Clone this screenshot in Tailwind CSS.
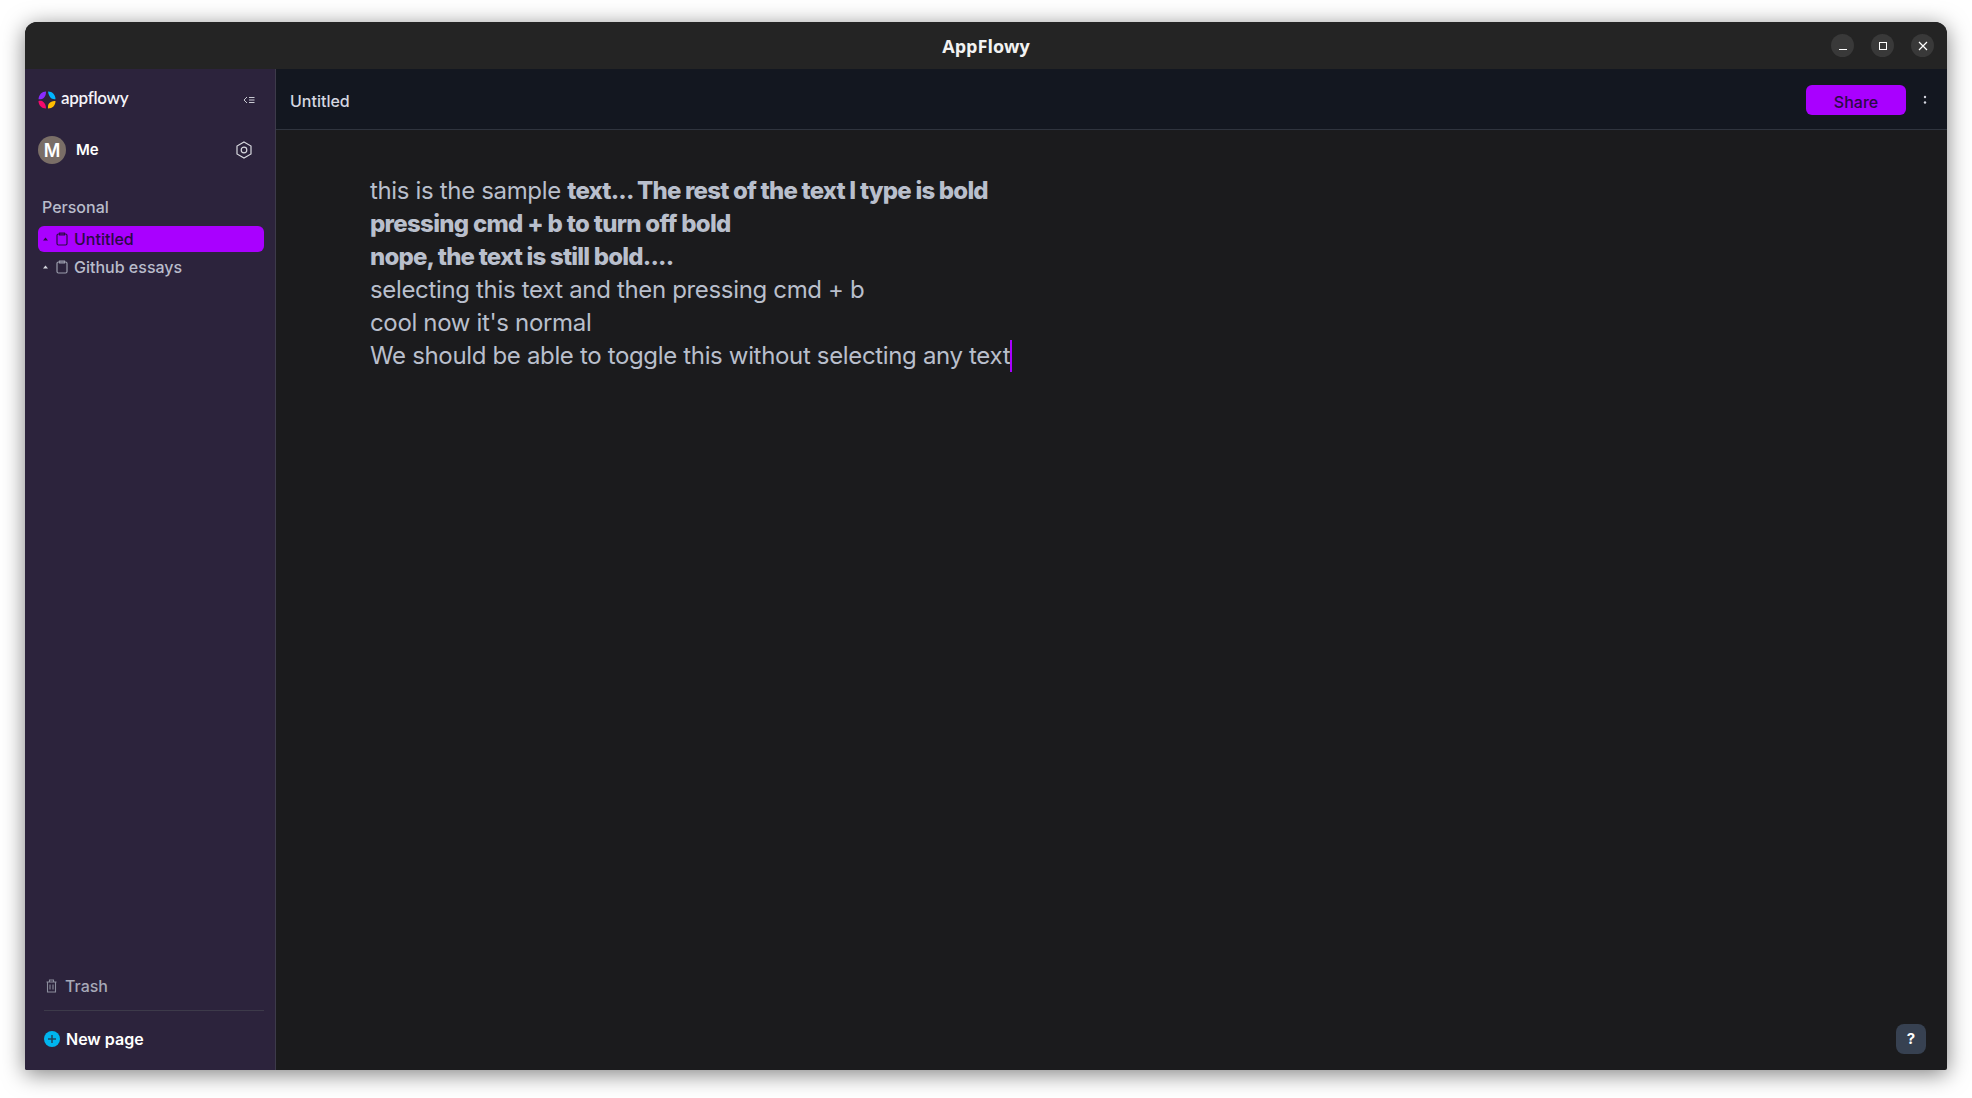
<!DOCTYPE html>
<html lang="en">
<head>
    <meta charset="UTF-8">
    <title>AppFlowy</title>
    <script src="https://cdn.jsdelivr.net/npm/@tailwindcss/browser@4"></script>
</head>
<body class="bg-white w-[1972px] h-[1098px] overflow-hidden pt-[22px] pl-[25px] font-['Inter',sans-serif]">
    <div class="w-[1922px] h-[1048px] flex flex-col rounded-t-xl rounded-b-[2px] overflow-hidden shadow-[0_4px_22px_rgba(0,0,0,0.5)] bg-[#1b1b1d]">

        <!-- Title bar -->
        <div class="h-[47px] shrink-0 bg-[#242424] relative flex items-center justify-center">
            <span class="text-[18px] font-bold text-[#f2f2f2] pt-[1px] font-['Open_Sans',sans-serif]">AppFlowy</span>
            <div class="absolute right-[13px] top-[12px] flex gap-[17px]">
                <div class="w-[23px] h-[23px] rounded-full bg-[#393939] flex items-center justify-center">
                    <svg width="10" height="10" viewBox="0 0 10 10"><path d="M1 8.5h8" stroke="#fff" stroke-width="1"/></svg>
                </div>
                <div class="w-[23px] h-[23px] rounded-full bg-[#393939] flex items-center justify-center">
                    <svg width="10" height="10" viewBox="0 0 10 10"><rect x="1.5" y="1.5" width="7" height="7" fill="none" stroke="#fff" stroke-width="1"/></svg>
                </div>
                <div class="w-[23px] h-[23px] rounded-full bg-[#393939] flex items-center justify-center">
                    <svg width="10" height="10" viewBox="0 0 10 10"><path d="M1 1l8 8M9 1l-8 8" stroke="#fff" stroke-width="1.2"/></svg>
                </div>
            </div>
        </div>

        <div class="flex-1 flex min-h-0">
            <!-- Sidebar -->
            <div class="w-[251px] shrink-0 bg-[#2c233c] border-r border-[#3d3a4a] flex flex-col">
                <div class="h-[61px] flex items-center pl-[13px] pr-[20px] justify-between">
                    <div class="flex items-center gap-[5px]">
                        <svg width="18" height="18" viewBox="0 0 18 18">
                            <path d="M8 0.500C4 0.500 1 3.500 0.500 8.300 3.500 8.600 5.500 7.500 6.500 6 7.500 4.600 8 3 8 0.500z" fill="#8a2bff"/>
                            <path d="M10 0.500C10.500 3.500 11.500 6 13.500 7.500c1.200.6 2.800.9 4 .7C17.500 4 14.500 0.500 10 0.500z" fill="#00b5ff"/>
                            <path d="M0.500 10C0.500 14 3.500 17.500 8 17.500 8 14 6.500 11.500 4.500 10.300 3 9.600 1.500 9.700 0.500 10z" fill="#f5096c"/>
                            <path d="M17.500 10C14.500 9.700 12.500 11 11 12.500 10 13.800 9.800 15.500 10 17.500 14.500 17.500 17.500 14.500 17.500 10z" fill="#ffbd00"/>
                        </svg>
                        <span class="text-[17px] leading-[20px] pb-[3px] font-semibold text-[#f5f3f8] tracking-[-0.3px] font-['Lato',sans-serif]">appflowy</span>
                    </div>
                    <svg width="12" height="8" viewBox="0 0 12 8" fill="none" stroke="#c9cad3" stroke-width="1">
                        <path d="M4 1L1 4l3 3M6 1.500h5.500M6 4h5.500M6 6.500h5.500"/>
                    </svg>
                </div>

                <div class="flex items-center pl-[13px] pr-[23px] h-[28px] mt-[6px] justify-between">
                    <div class="flex items-center gap-[10px]">
                        <div class="w-[28px] h-[28px] rounded-full bg-[#7a6e67] flex items-center justify-center text-[18px] font-semibold text-white">M</div>
                        <span class="text-[15px] pt-[1px] font-semibold text-white">Me</span>
                    </div>
                    <svg width="16" height="18" viewBox="0 0 16 18" fill="none" stroke="#d7d7de" stroke-width="1.200">
                        <path d="M8 1l7 4v8l-7 4-7-4V5z"/>
                        <circle cx="8" cy="9" r="2.800"/>
                    </svg>
                </div>

                <div class="pl-[17px] mt-[33px] text-[16px] leading-[20px] font-medium text-[#b9bccb]">Personal</div>

                <div class="mt-[9px] mx-[13px] w-[226px] h-[26px] rounded-md bg-[#a900ff] flex items-center pl-[5px] gap-[7px] text-[16px] text-[#2b0a45] font-medium">
                    <svg width="5" height="4" viewBox="0 0 5 4"><path d="M2.500 0.500L5 3.500H0z" fill="#2b0a45"/></svg>
                    <svg class="ml-[1px] -mr-[1px]" width="12" height="14" viewBox="0 0 12 14" fill="none" stroke="#2b0a45" stroke-width="1.200"><rect x="1" y="2" width="10" height="11" rx="1.500"/><path d="M3.500 1h5v2h-5z"/></svg>
                    <span>Untitled</span>
                </div>
                <div class="mt-[2px] mx-[13px] w-[226px] h-[26px] flex items-center pl-[5px] gap-[7px] text-[16px] text-[#b9bccb] font-medium">
                    <svg width="5" height="4" viewBox="0 0 5 4"><path d="M2.500 0.500L5 3.500H0z" fill="#d5d6de"/></svg>
                    <svg class="ml-[1px] -mr-[1px]" width="12" height="14" viewBox="0 0 12 14" fill="none" stroke="#9a9cab" stroke-width="1.200"><rect x="1" y="2" width="10" height="11" rx="1.500"/><path d="M3.500 1h5v2h-5z"/></svg>
                    <span>Github essays</span>
                </div>

                <div class="mt-auto pl-[21px] flex items-center gap-[8px] text-[16px] leading-[22px] text-[#a7a9b8] font-medium">
                    <svg width="11" height="14" viewBox="0 0 11 14" fill="none" stroke="#8b8d9c" stroke-width="1.100"><path d="M0.500 3h10M3.500 3V1h4v2M1.500 3v10h8V3M4 5.500v5M7 5.500v5"/></svg>
                    <span>Trash</span>
                </div>
                <div class="mt-[13px] ml-[19px] w-[220px] border-t border-[#3d3a4a]"></div>
                <div class="mt-[17px] mb-[20px] pl-[19px] flex items-center gap-[6px] text-[16px] leading-[22px] font-semibold text-white">
                    <svg width="16" height="16" viewBox="0 0 16 16"><circle cx="8" cy="8" r="8" fill="#00b5ef"/><path d="M8 4v8M4 8h8" stroke="#20445e" stroke-width="1.500"/></svg>
                    <span>New page</span>
                </div>
            </div>

            <!-- Main -->
            <div class="flex-1 flex flex-col min-w-0 relative">
                <div class="h-[61px] shrink-0 bg-[#131720] border-b border-[#2f343e] flex items-center pt-[2px] pl-[14px] pr-[20px]">
                    <span class="text-[16px] pt-[1px] text-[#d5d7e0] font-medium">Untitled</span>
                    <div class="ml-auto w-[100px] h-[30px] rounded-md bg-[#a900ff] flex items-center justify-center text-[16px] leading-[30px] pt-[3px] text-[#2b0a45] font-medium">Share</div>
                    <svg class="ml-[17px]" width="4" height="10" viewBox="0 0 4 10"><circle cx="2" cy="2" r="1.200" fill="#d5d7e0"/><circle cx="2" cy="7.500" r="1.200" fill="#d5d7e0"/></svg>
                </div>

                <div class="pl-[94px] pt-[44px] text-[24px] leading-[33px] text-[#b9bfcc] tracking-[-0.34px]">
                    <div>this is the sample <b class="font-extrabold tracking-[-0.8px]">text... The rest of the text I type is bold</b></div>
                    <div class="font-extrabold tracking-[-0.7px]">pressing cmd + b to turn off bold</div>
                    <div class="font-extrabold tracking-[-0.8px]">nope, the text is still bold....</div>
                    <div>selecting this text and then pressing cmd + b</div>
                    <div>cool now it's normal</div>
                    <div class="flex items-center">We should be able to toggle this without selecting any text<span class="w-[2px] h-[32px] bg-[#a900ff]"></span></div>
                </div>

                <div class="absolute right-[21px] bottom-[16px] w-[30px] h-[30px] rounded-lg bg-[#374151] flex items-center justify-center text-[15px] font-bold text-white">?</div>
            </div>
        </div>
    </div>
</body>
</html>
